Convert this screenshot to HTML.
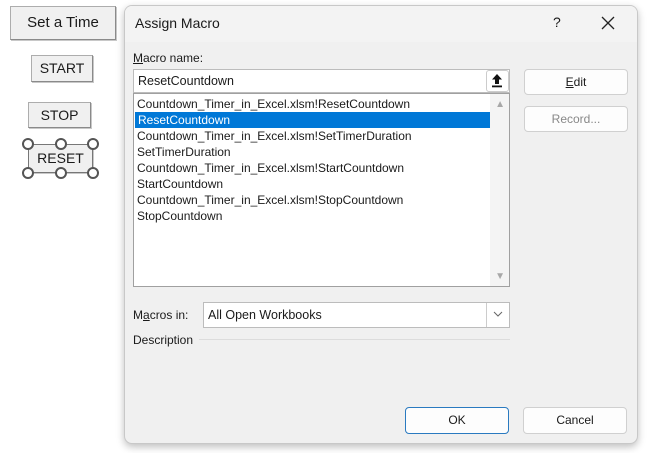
<!DOCTYPE html><html><head><style>
body{margin:0;width:650px;height:453px;background:#fff;position:relative;overflow:hidden;font-family:"Liberation Sans",sans-serif;font-size:12px;color:#1a1a1a}
.a{position:absolute;box-sizing:border-box}
.btn{background:#f0f0f0;border:1px solid #adadad;border-right-color:#8a8a8a;border-bottom-color:#8a8a8a;box-shadow:1px 1px 0 #c8c8c8;text-align:center;font-size:14px}
.h{position:absolute;width:12px;height:12px;border:2px solid #555;border-radius:50%;background:#fff;box-sizing:border-box}
.wb{background:#fdfdfd;border:1px solid #d0d0d0;border-radius:4px;text-align:center;line-height:24px}
.li{height:16px;line-height:16px;padding-left:3px;white-space:nowrap}
</style></head><body>
<div class="a btn" style="left:10px;top:6px;width:106px;height:34px;line-height:32px;font-size:15px">Set a Time</div>
<div class="a btn" style="left:31px;top:55px;width:62px;height:27px;line-height:25px">START</div>
<div class="a btn" style="left:28px;top:102px;width:63px;height:26px;line-height:24px">STOP</div>
<div class="a btn" style="left:28px;top:144px;width:65px;height:29px;line-height:27px;border-color:#777">RESET</div>
<div class="h" style="left:22px;top:138px"></div><div class="h" style="left:55px;top:138px"></div><div class="h" style="left:87px;top:138px"></div>
<div class="h" style="left:22px;top:167px"></div><div class="h" style="left:55px;top:167px"></div><div class="h" style="left:87px;top:167px"></div>
<div class="a" style="left:124px;top:5px;width:514px;height:439px;background:#f0f0f0;border:1px solid #c8c8c8;border-radius:8px;box-shadow:0 3px 8px rgba(0,0,0,.25);overflow:hidden">
<div class="a" style="left:0;top:0;width:100%;height:36px;background:#f3f3f3"></div>
<div class="a" style="left:10px;top:9px;font-size:14px">Assign Macro</div>
<div class="a" style="left:428px;top:8px;font-size:14px">?</div>
<svg class="a" style="left:476px;top:10px" width="14" height="14"><path d="M1 1L13 13M13 1L1 13" stroke="#222" stroke-width="1.3"/></svg>
</div>
<div class="a" style="left:133px;top:51px"><u>M</u>acro name:</div>
<div class="a" style="left:133px;top:69px;width:377px;height:24px;background:#fff;border:1px solid #bcbcbc;padding:4px 4px;font-size:12.5px">ResetCountdown</div>
<div class="a" style="left:486px;top:70px;width:23px;height:22px;background:#fff;border:1px solid #ccc;border-radius:3px"></div>
<svg class="a" style="left:491px;top:73px" width="12" height="15"><path d="M6 1L1 6.5H4V11H8V6.5H11Z" fill="#111"/><rect x="1" y="12.5" width="10" height="1.8" fill="#111"/></svg>
<div class="a" style="left:133px;top:93px;width:377px;height:194px;background:#fff;border:1px solid #a0a0a0;padding-top:2px;font-size:12px">
<div class="li">Countdown_Timer_in_Excel.xlsm!ResetCountdown</div>
<div class="li" style="background:#0078d7;color:#fff;width:353px;margin-left:1px">ResetCountdown</div>
<div class="li">Countdown_Timer_in_Excel.xlsm!SetTimerDuration</div>
<div class="li">SetTimerDuration</div>
<div class="li">Countdown_Timer_in_Excel.xlsm!StartCountdown</div>
<div class="li">StartCountdown</div>
<div class="li">Countdown_Timer_in_Excel.xlsm!StopCountdown</div>
<div class="li">StopCountdown</div>
<div class="a" style="right:0;top:0;width:19px;height:192px;background:#f4f4f4"></div>
<div class="a" style="right:4px;top:5px;color:#a8a8a8;font-size:10px">▲</div>
<div class="a" style="right:4px;bottom:4px;color:#a8a8a8;font-size:10px">▼</div>
</div>
<div class="a wb" style="left:524px;top:69px;width:104px;height:26px"><u>E</u>dit</div>
<div class="a wb" style="left:524px;top:106px;width:104px;height:26px;color:#888">Record...</div>
<div class="a" style="left:133px;top:308px">M<u>a</u>cros in:</div>
<div class="a" style="left:203px;top:302px;width:307px;height:26px;background:#fff;border:1px solid #bcbcbc;padding:5px 4px;font-size:12.5px">All Open Workbooks</div>
<div class="a" style="left:486px;top:303px;width:1px;height:24px;background:#ccc"></div>
<svg class="a" style="left:493px;top:311px" width="10" height="6"><path d="M1 1L5 5L9 1" stroke="#666" fill="none"/></svg>
<div class="a" style="left:133px;top:333px">Description</div>
<div class="a" style="left:199px;top:339px;width:311px;height:1px;background:#dcdcdc"></div>
<div class="a wb" style="left:405px;top:407px;width:104px;height:27px;border:1.5px solid #2a7ac0;line-height:24px">OK</div>
<div class="a wb" style="left:523px;top:407px;width:104px;height:27px">Cancel</div>
</body></html>
